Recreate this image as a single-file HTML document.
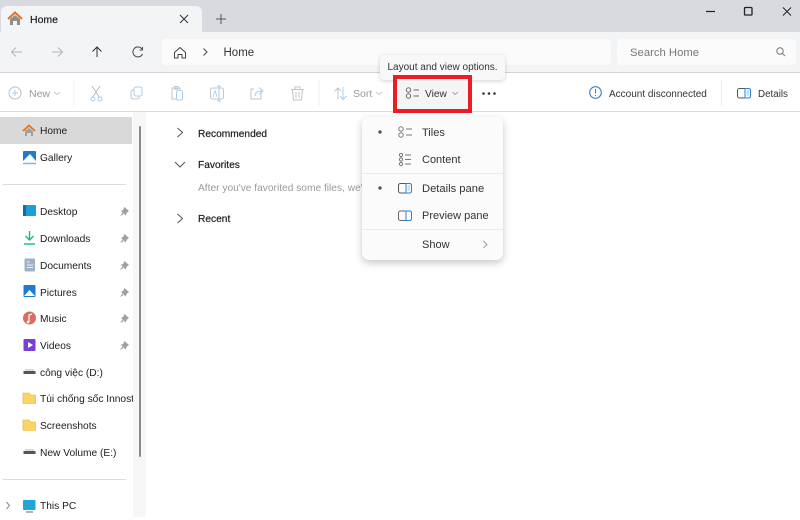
<!DOCTYPE html>
<html><head><meta charset="utf-8"><style>
html,body{margin:0;padding:0;background:#fff}
#r{position:relative;width:800px;height:520px;overflow:hidden;background:#fff;font-family:"Liberation Sans","Noto Sans CJK SC",sans-serif;color:#1c1c1c;font-size:10.2px}
#r>div{position:absolute}
.t{white-space:nowrap;line-height:14px;height:14px}
svg{position:absolute;overflow:visible}
.g{color:#9a9a9a}
</style></head><body><div id="r">
<div style="left:0;top:0;width:800px;height:32px;background:#d9dadf"></div>
<div style="left:1px;top:6px;width:201px;height:26px;background:#f3f4f6;border-radius:6px 6px 0 0"></div>
<div style="left:0;top:32px;width:800px;height:40px;background:#f3f4f6"></div>
<div style="left:0;top:72px;width:800px;height:1px;background:#d4d4d6"></div>
<div style="left:0;top:111px;width:800px;height:1px;background:#dcdcdc"></div>
<div style="left:162px;top:39px;width:449px;height:26px;background:#fbfbfc;border-radius:4px"></div>
<div style="left:617px;top:39px;width:179px;height:26px;background:#fbfbfc;border-radius:4px"></div>

<svg style="left:0;top:0" width="800" height="120" fill="none">
<path d="M8 19 L15 12.500 L22 19" stroke="#e8731c" stroke-width="2"/><path d="M10 19 L15 15 L20 19 V25 H17 V21 H13 V25 H10Z" fill="#8f8f8f"/>
<path d="M180 15 L188 23 M188 15 L180 23" stroke="#333" stroke-width="1"/>
<path d="M216 19 H226 M221 14 V24" stroke="#555" stroke-width="1"/>
<path d="M706 11.500 H715" stroke="#222" stroke-width="1.200"/>
<rect x="744.500" y="7.500" width="7.500" height="7.500" stroke="#222" stroke-width="1.300" rx=".8"/>
<path d="M783 7.500 L791 15.500 M791 7.500 L783 15.500" stroke="#222" stroke-width="1"/>
<path d="M22 52 H12 M16 47.500 L11.500 52 L16 56.500" stroke="#b4b6b8" stroke-width="1"/>
<path d="M52 52 H62 M58 47.500 L62.500 52 L58 56.500" stroke="#b4b6b8" stroke-width="1"/>
<path d="M97 57 V47 M92.500 51.500 L97 47 L101.500 51.500" stroke="#333" stroke-width="1"/>
<path d="M142 49 A5 5 0 1 0 142.500 54 M142.500 47 V50 H139.500" stroke="#444" stroke-width="1"/>
<path d="M174.500 52.500 L180 47.500 L185.500 52.500 V58 H182 V54.500 H178 V58 H174.500Z" stroke="#444" stroke-width="1" stroke-linejoin="round"/>
<path d="M203.500 48.500 L207 52 L203.500 55.500" stroke="#444" stroke-width="1"/>
<circle cx="780" cy="51" r="3.200" stroke="#777" stroke-width="1"/><path d="M782.500 53.500 L785 56" stroke="#777" stroke-width="1"/>

<circle cx="15" cy="93" r="6" stroke="#bcc1c6" stroke-width="1"/><path d="M15 90 V96 M12 93 H18" stroke="#a5cdee" stroke-width="1"/>
<path d="M54 92 L57 94.500 L60 92" stroke="#b8b8b8" stroke-width=".8"/>
<path d="M74 80 V106" stroke="#f0f0f0"/>
<path d="M92 86 L99 97 M100 86 L93 97" stroke="#bbb" stroke-width="1"/><circle cx="93" cy="99" r="2" stroke="#a5cdee"/><circle cx="100" cy="99" r="2" stroke="#a5cdee"/>
<rect x="131" y="90" width="8" height="9" rx="2" stroke="#c4c4c4"/><rect x="134" y="87" width="8" height="9" rx="2" fill="#fff" stroke="#a9d0f0"/>
<path d="M176 99 H172 V88 H180 V90" stroke="#c4c4c4"/><rect x="174.500" y="86.500" width="3.500" height="2.500" stroke="#c4c4c4"/><rect x="176.500" y="90.500" width="6" height="9.500" rx="1.500" fill="#fff" stroke="#a9d0f0"/>
<rect x="210.500" y="88" width="13" height="11" rx="2" stroke="#c4c4c4"/><path d="M219 86 V101 M217 86 H221 M217 101 H221" stroke="#a5cdee"/><path d="M213 97 L215 90.500 L217 97" stroke="#a5cdee" stroke-width=".8"/>
<path d="M261 91 V99 H251 V89 H254" stroke="#c4c4c4"/><path d="M255 96 C255 92 258 91 262 91 M259 87.500 L263 91 L259 94" stroke="#a9d0f0"/>
<path d="M291 89.500 H304 M295 89 V87 H300 V89 M292.500 90 L293.500 100 H301.500 L302.500 90 M296 92 V98 M299 92 V98" stroke="#c4c4c4"/>
<path d="M319 80 V106" stroke="#f0f0f0"/>
<path d="M338 99 V88 M334.500 91.500 L338 88 L341 91" stroke="#c4c4c4"/><path d="M343 87 V99 M340 96 L343 99.500 L346.500 96" stroke="#a9d0f0"/>
<path d="M376 92 L379 94.500 L382 92" stroke="#b8b8b8" stroke-width=".8"/>
</svg>

<div class="t" style="left:30px;top:13px;font-size:10.5px;-webkit-text-stroke:.2px #222">Home</div>
<div class="t" style="left:223.500px;top:46px;font-size:11.5px;color:#333">Home</div>
<div class="t" style="left:630px;top:46px;font-size:11.3px;color:#777">Search Home</div>
<div class="t g" style="left:29px;top:87px;font-size:10.5px">New</div>
<div class="t g" style="left:353px;top:87px;font-size:10.5px">Sort</div>

<!-- tooltip -->
<div style="left:380px;top:55px;width:125px;height:25px;background:#f8f8f9;border-radius:4px;box-shadow:0 1px 4px rgba(0,0,0,.18)"></div>
<div class="t" style="left:387.500px;top:61px;font-size:10px;color:#333">Layout and view options.</div>

<!-- View button highlight -->
<div style="left:393px;top:75px;width:79px;height:38px;box-sizing:border-box;border:4px solid #ed1c24;background:#f5f5f5"></div>
<svg style="left:0;top:0" width="800" height="120" fill="none">
<circle cx="408.500" cy="90" r="2.200" stroke="#666"/><circle cx="408.500" cy="96" r="2.200" stroke="#666"/><path d="M413.500 90 H419 M413.500 96 H419" stroke="#666"/>
<path d="M452.500 92 L455 94.500 L458 92" stroke="#888" stroke-width=".8"/>
<circle cx="483.500" cy="93.500" r="1.300" fill="#333"/><circle cx="489" cy="93.500" r="1.300" fill="#333"/><circle cx="494.500" cy="93.500" r="1.300" fill="#333"/>
<circle cx="595.500" cy="92.500" r="5.800" stroke="#2a86d8" stroke-width="1.100"/><path d="M595.500 89 V93.500 M595.500 95 V96" stroke="#2a86d8"/>
<path d="M721.500 80 V106" stroke="#ececec"/>
<rect x="737.500" y="88.500" width="13" height="9.500" rx="2" stroke="#555"/><path d="M745 88.500 H749 A2 2 0 0 1 750.500 90.500 V96 A2 2 0 0 1 749 98 H745Z" fill="#fff" stroke="#2a86d8"/><path d="M746.500 91 H749 M746.500 93 H749 M746.500 95 H749" stroke="#6aaee6" stroke-width=".8"/>
</svg>
<div class="t" style="left:425px;top:88px;color:#333">View</div>
<div class="t" style="left:609px;top:88px;font-size:10px;color:#333">Account disconnected</div>
<div class="t" style="left:758px;top:88px;font-size:9.8px;color:#333">Details</div>

<!-- sidebar -->
<div style="left:133px;top:112px;width:13px;height:405px;background:#f7f7f7"></div>
<div style="left:139px;top:126px;width:2px;height:331px;background:#8a8a8a;border-radius:1px"></div>
<div style="left:0;top:117px;width:132px;height:27px;background:#d9d9d9"></div>
<div style="left:3px;top:184px;width:123px;height:1px;background:#dcdcdc"></div>
<div style="left:3px;top:479px;width:123px;height:1px;background:#dcdcdc"></div>

<svg style="left:0;top:0" width="146" height="520" fill="none">
<path d="M23 131 L29 125.500 L35 131" stroke="#e8731c" stroke-width="1.800"/><path d="M25 131 L29 128 L33 131 V136 H31 V133 H27 V136 H25Z" fill="#a0a0a0"/>
<rect x="23" y="151" width="13" height="12" rx="1" fill="#1f7ad1"/><path d="M23 161 L30 154 L36 161 V163 H23Z" fill="#fff"/><path d="M23 163.500 H36" stroke="#7fb8ea" stroke-width="1.500"/>
<rect x="23" y="205" width="13" height="11" rx="1" fill="#1ea0d6"/><rect x="23" y="205" width="3" height="11" fill="#0b6fa8"/>
<path d="M29.500 231 V240 M25.500 236 L29.500 240 L33.500 236" stroke="#1db58a" stroke-width="1.400"/><path d="M24 244 H35" stroke="#1db58a" stroke-width="1.400"/>
<rect x="24.500" y="258.500" width="10.500" height="13" rx="1" fill="#9fb0c8"/><path d="M27 262 H30 M27 265 H33 M27 267.500 H33" stroke="#e8edf4"/>
<rect x="23.500" y="285" width="12" height="12" rx="1" fill="#1f7ad1"/><path d="M24 296 L29.500 290 L35 296Z" fill="#fff"/>
<circle cx="29.500" cy="318" r="6.500" fill="#d9705f"/><path d="M29 322 V315 L32 314" stroke="#fff" stroke-width="1.200"/><circle cx="28" cy="322" r="1.300" fill="#fff"/>
<rect x="23.500" y="339" width="12" height="12" rx="1" fill="#7a3fd6"/><path d="M28 342 L33 345 L28 348Z" fill="#fff"/>
<rect x="23.500" y="371" width="12" height="3" fill="#555"/><path d="M25 370 H34" stroke="#bbb"/>
<path d="M23 393 H29 L31 395 H35.500 V403.500 H23Z" fill="#fbd468" stroke="#e8b030" stroke-width=".6"/>
<path d="M23 420 H29 L31 422 H35.500 V430.500 H23Z" fill="#fbd468" stroke="#e8b030" stroke-width=".6"/>
<rect x="23.500" y="451" width="12" height="3" fill="#555"/><path d="M25 450 H34" stroke="#bbb"/>
<rect x="23" y="500" width="12.500" height="10" rx="1" fill="#22a5d8"/><path d="M26 512 H33" stroke="#999" stroke-width="1.500"/>
<path d="M6.500 502 L9.500 505.500 L6.500 509" stroke="#888"/>
<g fill="#a0a0a0" stroke="#a0a0a0" stroke-width=".6">
<path d="M124.500 207.500 L128.500 211 L126.500 212.500 L125.500 215 L121.500 211 L123.500 210Z M122.500 213 L120.500 215.500 L123 214Z"/>
<path d="M124.500 234.500 L128.500 238 L126.500 239.500 L125.500 242 L121.500 238 L123.500 237Z M122.500 240 L120.500 242.500 L123 241Z"/>
<path d="M124.500 261.500 L128.500 265 L126.500 266.500 L125.500 269 L121.500 265 L123.500 264Z M122.500 267 L120.500 269.500 L123 268Z"/>
<path d="M124.500 288.500 L128.500 292 L126.500 293.500 L125.500 296 L121.500 292 L123.500 291Z M122.500 294 L120.500 296.500 L123 295Z"/>
<path d="M124.500 314.500 L128.500 318 L126.500 319.500 L125.500 322 L121.500 318 L123.500 317Z M122.500 320 L120.500 322.500 L123 321Z"/>
<path d="M124.500 341.500 L128.500 345 L126.500 346.500 L125.500 349 L121.500 345 L123.500 344Z M122.500 347 L120.500 349.500 L123 348Z"/>
</g></svg>

<div class="t" style="left:40px;top:125px">Home</div>
<div class="t" style="left:40px;top:152px">Gallery</div>
<div class="t" style="left:40px;top:206px">Desktop</div>
<div class="t" style="left:40px;top:233px">Downloads</div>
<div class="t" style="left:40px;top:259.500px">Documents</div>
<div class="t" style="left:40px;top:286.500px">Pictures</div>
<div class="t" style="left:40px;top:313px">Music</div>
<div class="t" style="left:40px;top:340px">Videos</div>
<div class="t" style="left:40px;top:367px">công việc (D:)</div>
<div class="t" style="left:40px;top:393px;width:93px;overflow:hidden">Túi chống sốc Innost</div>
<div class="t" style="left:40px;top:420px">Screenshots</div>
<div class="t" style="left:40px;top:447px">New Volume (E:)</div>
<div class="t" style="left:40px;top:500px">This PC</div>

<!-- main -->
<svg style="left:0;top:0" width="240" height="240" fill="none" stroke="#555">
<path d="M177.500 128 L182.500 132.500 L177.500 137"/><path d="M175 162 L180 167 L185 162"/><path d="M177.500 214 L182.500 218.500 L177.500 223"/>
</svg>
<div class="t" style="left:198px;top:128px;-webkit-text-stroke:.2px #222">Recommended</div>
<div class="t" style="left:198px;top:159px;-webkit-text-stroke:.2px #222">Favorites</div>
<div class="t" style="left:198px;top:182px;color:#9a9a9a;width:165px;overflow:hidden">After you've favorited some files, we'll</div>
<div class="t" style="left:198px;top:213px;-webkit-text-stroke:.2px #222">Recent</div>

<!-- menu -->
<div style="left:362px;top:117px;width:141px;height:143px;background:#fbfbfb;border-radius:7px;box-shadow:0 3px 8px rgba(0,0,0,.22)"></div>
<div style="left:362px;top:173px;width:141px;height:1px;background:#ebebeb"></div>
<div style="left:362px;top:229px;width:141px;height:1px;background:#ebebeb"></div>
<svg style="left:355px;top:110px" width="160" height="160" fill="none">
<circle cx="25" cy="22" r="1.700" fill="#555"/><circle cx="25" cy="78" r="1.700" fill="#555"/>
<circle cx="46" cy="19" r="2.200" stroke="#777"/><circle cx="46" cy="25" r="2.200" stroke="#777"/><path d="M51 19 H57 M51 25 H57" stroke="#777"/>
<circle cx="46" cy="45" r="1.600" stroke="#777"/><circle cx="46" cy="49.500" r="1.600" stroke="#777"/><circle cx="46" cy="54" r="1.600" stroke="#777"/><path d="M50 45 H56 M50 49.500 H56 M50 54 H56" stroke="#777"/>
<rect x="43.500" y="73.500" width="13" height="9.500" rx="2" stroke="#555"/><path d="M51 73.500 H55 A2 2 0 0 1 56.500 75.500 V81 A2 2 0 0 1 55 83 H51Z" fill="#fff" stroke="#2a86d8"/><path d="M52.500 76 H55 M52.500 78 H55 M52.500 80 H55" stroke="#6aaee6" stroke-width=".8"/>
<rect x="43.500" y="101" width="13" height="9.500" rx="2" stroke="#666"/><path d="M51 101 H55 A2 2 0 0 1 56.500 103 V108.500 A2 2 0 0 1 55 110.500 H51Z" fill="#fff" stroke="#2a86d8"/>
<path d="M128.500 131 L132 134.500 L128.500 138" stroke="#999"/>
</svg>
<div class="t" style="left:422px;top:126px;font-size:11px;color:#333">Tiles</div>
<div class="t" style="left:422px;top:153px;font-size:11px;color:#333">Content</div>
<div class="t" style="left:422px;top:181.500px;font-size:11.200px;color:#333">Details pane</div>
<div class="t" style="left:422px;top:209px;font-size:11px;color:#333">Preview pane</div>
<div class="t" style="left:422px;top:238px;font-size:11px;color:#333">Show</div>
</div></body></html>
